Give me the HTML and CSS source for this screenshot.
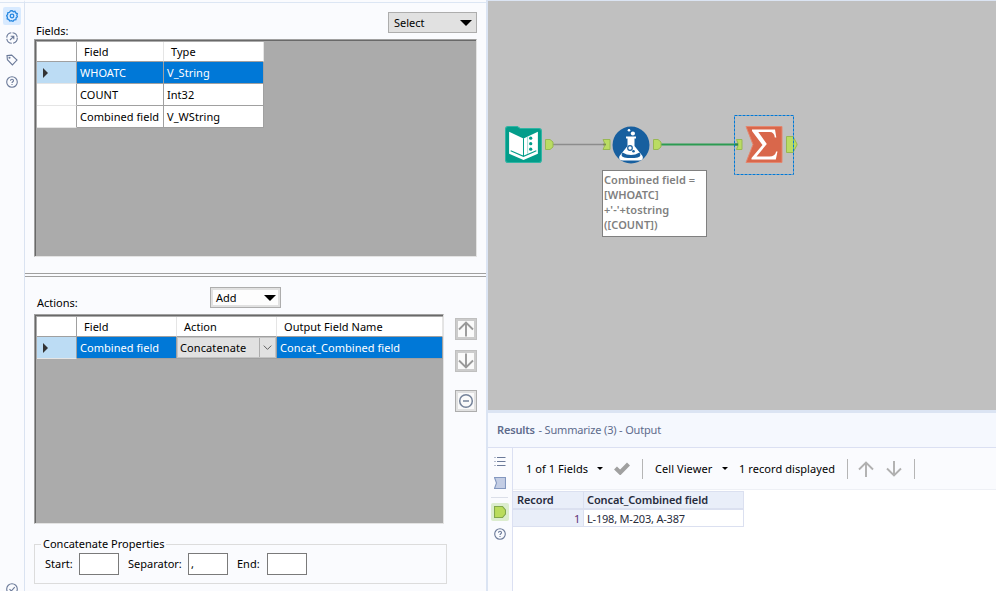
FILE: index.html
```html
<!DOCTYPE html>
<html lang="en">
<head>
    <meta charset="UTF-8">
    <meta name="viewport" content="width=device-width, initial-scale=1.0">
    <title>Summarize - Configuration</title>
    <link rel="stylesheet" href="styles.css">
</head>
<body>
    <div class="app">
        <section class="config">
            <nav class="rail">
                <button class="rail-btn active">
                    <svg width="12" height="12" viewBox="0 0 12 12"><path d="M6 .6L7.3 1.7 9 1.3 9.7 2.9 11.3 3.7 10.8 5.3 11.4 6.7 10.1 7.9 9.9 9.6 8.2 9.9 7 11.3 5.5 10.6 3.8 11.1 2.8 9.6 1.2 8.9 1.4 7.2 .6 5.8 1.6 4.5 1.8 2.8 3.5 2.3 4.5 .9z"/><circle cx="6" cy="6" r="1.8"/></svg>
                </button>
                <button class="rail-btn">
                    <svg width="12" height="12" viewBox="0 0 12 12"><circle cx="6" cy="6" r="5.3" stroke-dasharray="7 1.3"/><path d="M4 8l3.7-3.7M4.7 4.2h3.1v3.1"/></svg>
                </button>
                <button class="rail-btn">
                    <svg width="12" height="12" viewBox="0 0 12 12"><path d="M1 1.6l4.7-.5 5.3 5-4.6 4.8-5-5.2z"/><circle cx="3.5" cy="3.7" r=".5"/></svg>
                </button>
                <button class="rail-btn">
                    <svg width="12" height="12" viewBox="0 0 12 12"><circle cx="6" cy="6" r="5.3"/><path d="M4.5 4.8c0-2 3-2 3 0 0 1-1.5 1-1.5 2.2M6 8v1"/></svg>
                </button>
                <button class="rail-btn rail-last">
                    <svg width="12" height="12" viewBox="0 0 12 12"><circle cx="6" cy="6" r="5.3"/><path d="M3.5 6.2l1.8 1.8 3.4-3.8"/></svg>
                </button>
            </nav>
            <div class="config-body">
                <div class="pane fields-pane">
                    <div class="pane-head">
                        <span class="label">Fields:</span>
                        <button class="drop select-drop">Select<i class="caret"></i></button>
                    </div>
                    <div class="grid-box fields-box">
                        <table class="grid fields-grid">
                            <tr><th class="row-head"></th><th>Field</th><th>Type</th></tr>
                            <tr class="selected"><td class="row-head"><i class="marker"></i></td><td>WHOATC</td><td>V_String</td></tr>
                            <tr><td class="row-head"></td><td>COUNT</td><td>Int32</td></tr>
                            <tr><td class="row-head"></td><td>Combined field</td><td>V_WString</td></tr>
                        </table>
                    </div>
                </div>
                <div class="splitter"></div>
                <div class="pane actions-pane">
                    <div class="actions-head">
                        <span class="label">Actions:</span>
                        <button class="drop add-drop">Add<i class="caret"></i></button>
                    </div>
                    <div class="actions-row">
                        <div class="grid-box actions-box">
                            <table class="grid actions-grid">
                                <tr><th class="row-head"></th><th>Field</th><th>Action</th><th>Output Field Name</th></tr>
                                <tr class="selected">
                                    <td class="row-head"><i class="marker"></i></td>
                                    <td>Combined field</td>
                                    <td class="combo-cell"><div class="combo"><span>Concatenate</span><svg width="16" height="19" viewBox="0 0 16 19"><path d="M4 7.5l4 4 4-4"/></svg></div></td>
                                    <td>Concat_Combined field</td>
                                </tr>
                            </table>
                        </div>
                        <div class="side-btns">
                            <button class="side-btn"><svg width="16" height="16" viewBox="0 0 16 16"><path d="M8 15.5V1.5M1 8.5l7-7 7 7"/></svg></button>
                            <button class="side-btn"><svg width="16" height="16" viewBox="0 0 16 16"><path d="M8 .5v14M1 7.5l7 7 7-7"/></svg></button>
                            <button class="side-btn remove"><svg width="16" height="16" viewBox="0 0 16 16"><circle cx="8" cy="8" r="6.3"/><path d="M5 8h6"/></svg></button>
                        </div>
                    </div>
                    <fieldset class="props">
                        <legend>Concatenate Properties</legend>
                        <label class="start">Start:</label><input type="text">
                        <label class="sep">Separator:</label><input type="text" value=",">
                        <label class="end">End:</label><input type="text">
                    </fieldset>
                </div>
            </div>
        </section>

        <main class="work">
            <div class="canvas">
                <!-- connections and anchors -->
                <svg class="wires" width="508" height="409" viewBox="0 0 508 409">
                    <path d="M64 144.5H117" stroke="#8c8c8c" stroke-width="1.6"/>
                    <path d="M172 144.5H250" stroke="#2c9b52" stroke-width="2"/>
                    <g fill="#badc63" stroke="#98b853">
                        <path d="M57.5 139.5h4.5l3 2.500v5l-3 2.500h-4.500z"/>
                        <path d="M115 139.5h7v10h-7l2.200-5z"/>
                        <path d="M165.5 139.5h4.5l3 2.500v5l-3 2.500h-4.500z"/>
                        <path d="M248.500 139.500h5.500v10h-5.500l2-5z"/>
                        <path d="M298.500 136.500h6.500l4 7.500v1l-4 7.500h-6.500z"/>
                    </g>
                    <path d="M115 144.5h3" stroke="#7d8a55" stroke-width="1.6"/>
                    <path d="M247 144.5h3" stroke="#2c8a48" stroke-width="2"/>
                </svg>
                <div class="node input-node">
                    <svg width="37" height="37" viewBox="0 0 36 36">
                        <path fill="#039d8a" stroke="#31b5a4" d="M.5 33V3Q.5.5 3 .5h9l3 2h18q2.500 0 2.500 2.500v28q0 2.500-2.500 2.500H3Q.5 35.500.5 33z"/>
                        <path fill="#fff" d="M4 5.500L17.400 12 18 12.400 18.600 12 32 5.500V27l-14 6-14-6z"/>
                        <path stroke="#039d8a" d="M18 12v17M5.500 24L18 29.500 30.500 24"/>
                        <path stroke="#8fd1c9" stroke-width=".8" d="M22 10.500v16.500"/>
                        <g fill="#039d8a"><circle cx="25" cy="11.800" r="1.600"/><circle cx="25" cy="17.200" r="1.600"/><circle cx="25" cy="22.500" r="1.600"/></g>
                    </svg>
                </div>
                <div class="node formula-node">
                    <svg width="38" height="38" viewBox="0 0 38 38">
                        <circle cx="19" cy="19" r="18.5" fill="#175f9f"/>
                        <g fill="#fff"><circle cx="17" cy="4.3" r="1.300"/><circle cx="20.900" cy="7.500" r="2.100"/><path d="M14 10.500h10v2h-1.500v7.500l8 10q1.500 4-3 4.500H10.500q-4.500-.5-3-4.500l8-10v-7.500H14z"/></g>
                        <path fill="#175f9f" d="M10.500 26.500q8.500 5 17 0 2.500 4-1.800 5-6.700 1-13.400 0-4.300-1-1.800-5z"/>
                        <circle cx="18" cy="22" r="2.300" fill="#fff" stroke="#175f9f" stroke-width="1.200"/><circle cx="21.500" cy="25.300" r="1.300" fill="#175f9f"/>
                    </svg>
                </div>
                <div class="note">Combined field =<br>[WHOATC]<br>+'-'+tostring<br>([COUNT])</div>
                <div class="node summarize-node">
                    <svg width="38" height="37" viewBox="0 0 38 37">
                        <path fill="#d9674b" stroke="#e38770" d="M1 .5h36v36H1l7-18z"/>
                        <path fill="#fff" d="M7 3.500h23l1.300 8h-1.500q-.6-5.500-5-5.500H13.300l8.500 12L11.500 30.500h13q5.500 0 6.700-5h1.300l-1.700 8H6.500v-1.500l11-13L7 5z"/>
                    </svg>
                </div>
                <svg class="selection" width="60" height="60"><rect x=".5" y=".5" width="59" height="59"/></svg>
            </div>

            <section class="results">
                <header class="results-title"><b>Results</b> - Summarize (3) - Output</header>
                <div class="results-body">
                    <nav class="results-rail">
                        <button class="rail-btn"><svg width="12" height="12" viewBox="0 0 12 12"><path d="M3 2.500h8.500M3 6.500h8.500M3 10.500h8.500M.5 2.500h1M.5 6.500h1M.5 10.500h1"/></svg></button>
                        <button class="rail-btn"><svg width="12" height="12" viewBox="0 0 12 12"><path fill="#c3cde4" stroke="#8397bf" d="M.5.5h11v11H.5l2-5.500z"/></svg></button>
                        <hr>
                        <button class="rail-btn output"><svg width="12" height="12" viewBox="0 0 12 12"><path fill="#badc5c" stroke="#82a74c" d="M.5.5h8L11.500 4v4l-3 3.500h-8z"/></svg></button>
                        <button class="rail-btn"><svg width="12" height="12" viewBox="0 0 12 12"><circle cx="6" cy="6" r="5.3"/><path d="M4.5 4.8c0-2 3-2 3 0 0 1-1.5 1-1.5 2.2M6 8v1"/></svg></button>
                    </nav>
                    <div class="results-main">
                        <div class="toolbar">
                            <span class="t-fields">1 of 1 Fields</span><i class="mini-caret"></i>
                            <svg class="check" width="16" height="13" viewBox="0 0 16 13"><path d="M1.500 6l4.700 4.500L14.500 2"/></svg>
                            <i class="divider"></i>
                            <span class="t-viewer">Cell Viewer</span><i class="mini-caret"></i>
                            <span class="t-count">1 record displayed</span>
                            <i class="divider"></i>
                            <svg class="arrow up" width="16" height="16" viewBox="0 0 16 16"><path d="M8 16V1.500M1 8.500l7-7 7 7"/></svg>
                            <svg class="arrow down" width="16" height="16" viewBox="0 0 16 16"><path d="M8 0v14.500M1 7.500l7 7 7-7"/></svg>
                            <i class="divider"></i>
                        </div>
                        <table class="records">
                            <tr><th>Record</th><th>Concat_Combined field</th></tr>
                            <tr><td class="num">1</td><td>L-198, M-203, A-387</td></tr>
                        </table>
                    </div>
                </div>
            </section>
        </main>
    </div>
</body>
</html>
```
FILE: styles.css
```css
* {
    box-sizing: border-box;
}
body {
    margin: 0;
    font: 11px/16px "Noto Sans", "Open Sans", sans-serif;
    color: #000;
    background: #fafbfe;
    overflow: hidden;
}
button {
    font: inherit;
    color: inherit;
    padding: 0;
    border: none;
    background: none;
}
svg {
    display: block;
    fill: none;
    flex: none;
}
i {
    flex: none;
}
.app {
    display: flex;
    width: 996px;
    height: 591px;
}

/* configuration panel */
.config {
    display: flex;
    width: 488px;
    border-right: 2px solid #dbe4f3;
    flex: none;
    overflow: hidden;
}
.rail {
    width: 25px;
    border-top: 2px solid #fafbfe;
    border-right: 1px solid #dae3f1;
    box-shadow: inset 0 1px #dce6f4;
    padding-top: 5px;
    padding-left: 3px;
    display: flex;
    flex-direction: column;
    gap: 4px;
    flex: none;
}
.rail-btn {
    width: 18px;
    height: 18px;
    border-radius: 2px;
    display: flex;
    align-items: center;
    justify-content: center;
    flex: none;
}
.rail-btn svg {
    stroke: #6b7a99;
    stroke-width: 1.1;
}
.rail-btn.active {
    background: #d8eaff;
}
.rail-btn.active svg {
    stroke: #2787e0;
    stroke-width: 1.3;
}
.rail-last {
    margin-top: 485px;
}
.config-body {
    flex: 1;
    border-top: 2px solid #fafbfe;
    box-shadow: inset 0 1px #dce6f4;
}
.fields-pane {
    height: 271px;
    padding: 10px 9px 0 9px;
}
.pane-head {
    display: flex;
    justify-content: space-between;
    height: 27px;
}
.label {
    padding-left: 2px;
}
.pane-head .label {
    padding-top: 11px;
}
.drop {
    display: flex;
    align-items: center;
    justify-content: space-between;
    border: 1px solid #adadad;
    height: 21px;
    padding: 0 4px 0 5px;
}
.select-drop {
    width: 89px;
    background: #e1e1e1;
}
.add-drop {
    width: 71px;
    background: #fdfdfd;
    box-shadow: inset 0 0 0 2px #e1e1e1;
}
.caret {
    border: 6px solid transparent;
    border-top-color: #000;
    border-bottom: none;
}
.grid-box {
    border: 1px solid #a0a0a0;
    border-right-color: #e3e3e3;
    border-bottom-color: #e3e3e3;
    background: #ababab;
    box-shadow: inset 1px 1px #696969;
    padding: 2px 0 0 2px;
}
.fields-box {
    width: 443px;
    height: 218px;
}
.grid {
    border-collapse: separate;
    border-spacing: 0;
    table-layout: fixed;
}
.grid th,
.grid td {
    height: 22px;
    padding: 0 0 0 3px;
    text-align: left;
    font-weight: normal;
    background: #fff;
    border-right: 1px solid #a0a0a0;
    border-bottom: 1px solid #a0a0a0;
    white-space: nowrap;
    line-height: 16px;
    letter-spacing: 0.04px;
}
.grid th {
    height: 20px;
    padding-left: 7px;
    border-right-color: #e5e5e5;
}
.grid .row-head {
    border-right-color: #a0a0a0;
    border-bottom-color: #e5e5e5;
}
.grid th.row-head {
    border-bottom-color: #a0a0a0;
}
.grid .selected td {
    background: #0078d7;
    color: #fff;
}
.grid .selected .row-head {
    background: #bcdcf4;
}
.fields-grid {
    width: 227px;
}
.row-head {
    width: 40px;
}
.fields-grid th:nth-child(2) {
    width: 87px;
}
.marker {
    display: block;
    width: 0;
    margin-left: 3px;
    border: 5px solid transparent;
    border-left-color: #333;
    border-right: none;
}
.splitter {
    height: 4px;
    border: 1px solid #a0a0a0;
    border-width: 1px 0;
}
.actions-pane {
    padding: 10px 9px 0 9px;
}
.actions-head {
    display: flex;
    height: 27px;
}
.actions-head .label {
    width: 176px;
    padding: 8px 0 0 3px;
}
.actions-row {
    display: flex;
    gap: 11px;
}
.actions-box {
    width: 410px;
    height: 210px;
    flex: none;
}
.actions-grid {
    width: 406px;
}
.actions-grid th:nth-child(2),
.actions-grid th:nth-child(3) {
    width: 100px;
}
.grid td.combo-cell {
    padding: 0;
}
.combo {
    height: 21px;
    border: 1px solid #c3c3c3;
    background: #e1e1e1;
    color: #000;
    display: flex;
    align-items: center;
    justify-content: space-between;
    padding-left: 2px;
    letter-spacing: 0.1px;
}
.combo svg {
    border-left: 1px solid #adadad;
    stroke: #555;
}
.side-btns {
    padding-top: 4px;
    display: flex;
    flex-direction: column;
    gap: 10px;
}
.side-btn {
    width: 22px;
    height: 22px;
    border: 1px solid #bfbfbf;
    background: #fafafa;
    box-shadow: inset 0 0 0 2px #ccc;
    padding: 2px;
}
.side-btn svg {
    stroke: #999;
    stroke-width: 1.9;
}
.side-btn.remove {
    margin-top: 8px;
    border-color: #adadad;
    box-shadow: inset 0 0 0 2px #e1e1e1;
}
.side-btn.remove svg {
    stroke: #75839a;
    stroke-width: 1.5;
}
.props {
    width: 413px;
    height: 48px;
    margin: 12px 0 0;
    padding: 0 0 8px 10px;
    border: 1px solid #dcdcdc;
    display: flex;
    align-items: center;
}
.props legend {
    margin-left: -4px;
    padding: 0 2px;
}
.props input {
    width: 40px;
    height: 22px;
    border: 1px solid #7a7a7a;
    background: #fff;
    padding: 0 2px;
    font: inherit;
}
.props label {
    padding-top: 1px;
}
.start {
    width: 34px;
}
.sep {
    width: 60px;
    margin-left: 9px;
}
.end {
    width: 30px;
    margin-left: 9px;
}

/* workflow canvas */
.work {
    flex: 1;
    display: flex;
    flex-direction: column;
    min-width: 0;
}
.canvas {
    position: relative;
    height: 410px;
    border-top: 1px solid #dbe4f3;
    background: #c0c0c0;
    flex: none;
}
.wires {
    position: absolute;
    left: 0;
    top: -1px;
}
.node {
    position: absolute;
}
.input-node {
    left: 17px;
    top: 125px;
}
.formula-node {
    left: 124px;
    top: 125px;
}
.summarize-node {
    left: 257px;
    top: 125px;
}
.note {
    position: absolute;
    left: 114px;
    top: 169px;
    width: 105px;
    height: 67px;
    border: 1px solid #808080;
    background: #fff;
    padding: 1px;
    color: #808080;
    font-weight: 600;
    line-height: 15px;
    letter-spacing: 0.05px;
    white-space: nowrap;
}
.selection {
    position: absolute;
    left: 246px;
    top: 114px;
    stroke: #0078d7;
    stroke-dasharray: 3 1;
}

/* results window */
.results {
    flex: 1;
    border-top: 3px solid #dbe4f3;
    display: flex;
    flex-direction: column;
}
.results-title {
    height: 35px;
    padding: 9px;
    background: #f5f8fe;
    border-bottom: 1px solid #dbe0f2;
    color: #5e6b8c;
    letter-spacing: -0.17px;
    flex: none;
}
.results-title b {
    font-weight: 600;
    margin-right: 1px;
}
.results-body {
    flex: 1;
    display: flex;
}
.results-rail {
    width: 25px;
    padding: 4px 0 0 3px;
    background: #fafbfe;
    border-right: 1px solid #dbe0f2;
    display: flex;
    flex-direction: column;
    gap: 4px;
}
.results-rail hr {
    width: 17px;
    height: 1px;
    border: none;
    background: #dbdfe9;
    margin: 1px 0;
}
.rail-btn.output {
    background: #dcedce;
}
.results-main {
    flex: 1;
    background: #fff;
}
.toolbar {
    height: 42px;
    background: #fafbfe;
    border-bottom: 1px solid #eef0f5;
    display: flex;
    align-items: center;
    padding-left: 13px;
    white-space: nowrap;
    letter-spacing: 0.07px;
}
.t-fields {
    width: 71px;
}
.mini-caret {
    border: 3px solid transparent;
    border-top-color: #000;
    border-bottom: none;
}
.check {
    margin-left: 11px;
    stroke: #a0a0a0;
    stroke-width: 4.2;
}
.divider {
    width: 1px;
    height: 20px;
    background: #b5b5b5;
    margin-left: 12px;
}
.t-viewer {
    width: 67px;
    margin-left: 12px;
}
.t-count {
    width: 96px;
    margin-left: 11px;
}
.arrow {
    stroke: #b0b0b0;
    stroke-width: 1.9;
    margin-left: 12px;
}
.arrow.up {
    margin-left: 10px;
}
.records {
    width: 231px;
    margin-top: 1px;
    border-collapse: separate;
    border-spacing: 0;
    table-layout: fixed;
    border-top: 1px solid #dbe0f0;
    line-height: 16px;
}
.records th,
.records td {
    padding: 0 3px;
    text-align: left;
    border-right: 1px solid #dbe0f0;
    border-bottom: 1px solid #dbe0f0;
    color: #272b3c;
}
.records th {
    width: 160px;
    height: 18px;
    background: #e9eef9;
    border-bottom-width: 2px;
    font-weight: 600;
    letter-spacing: -0.1px;
}
.records th:first-child {
    width: 71px;
    padding-left: 4px;
}
.records td {
    height: 17px;
    padding-top: 1px;
    line-height: 15px;
    letter-spacing: -0.2px;
}
.records .num {
    background: #e9eef9;
    text-align: right;
    color: #603275;
}
```
